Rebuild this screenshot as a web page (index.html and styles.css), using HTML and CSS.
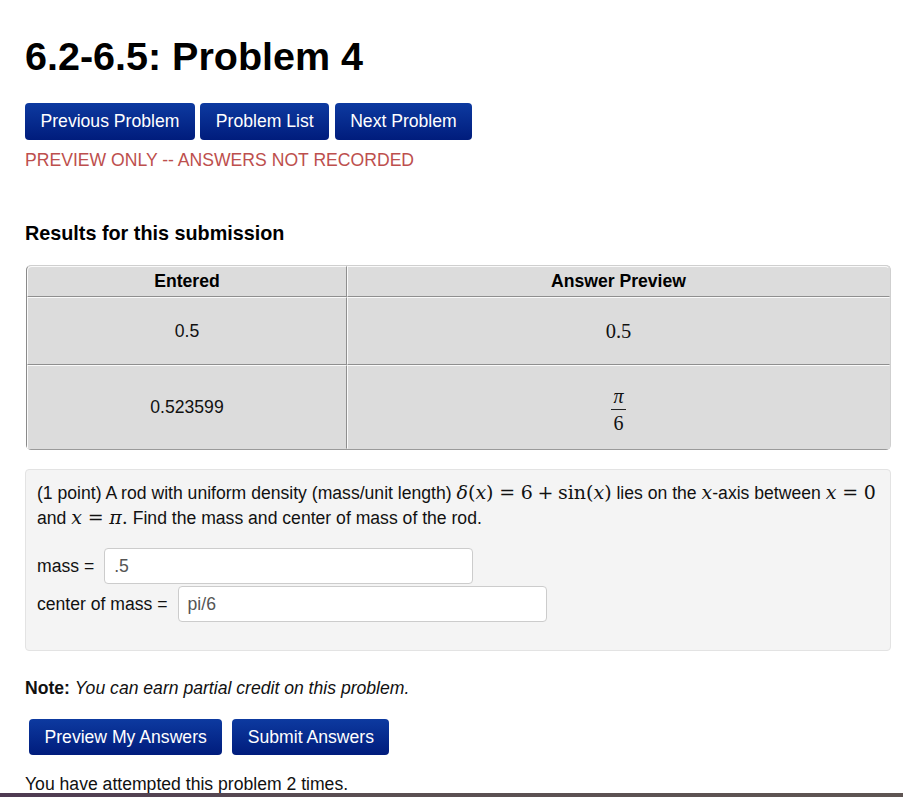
FILE: index.html
```html
<!DOCTYPE html>
<html lang="en">
<head>
  <meta charset="UTF-8" />
  <meta name="viewport" content="width=device-width, initial-scale=1.0" />
  <title>6.2-6.5: Problem 4</title>
  <link rel="stylesheet" href="styles.css">
</head>
<body>
  <div class="page">
    <h1>6.2-6.5: Problem 4</h1>

    <div class="nav">
      <a class="btn" href="#">Previous Problem</a>
      <a class="btn" href="#">Problem List</a>
      <a class="btn" href="#">Next Problem</a>
    </div>

    <p class="preview-msg">PREVIEW ONLY -- ANSWERS NOT RECORDED</p>

    <h3>Results for this submission</h3>

    <table class="results">
      <tr>
        <th>Entered</th>
        <th class="last">Answer Preview</th>
      </tr>
      <tr class="row-short">
        <td>0.5</td>
        <td class="last"><span class="math-preview">0.5</span></td>
      </tr>
      <tr class="row-tall">
        <td>0.523599</td>
        <td class="last">
          <span class="frac"><span class="num"><i>π</i></span><span class="den">6</span></span>
        </td>
      </tr>
    </table>

    <div class="problem">
      <p class="problem-text">(1 point) A rod with uniform density (mass/unit length) <span class="math"><i>δ</i>(<i>x</i>)<span class="rel">=</span>6<span class="bin">+</span>sin(<i>x</i>)</span> lies on the <span class="math"><i>x</i></span>-axis between <span class="math"><i>x</i><span class="rel">=</span>0</span><br>and <span class="math"><i>x</i><span class="rel">=</span><i>π</i>.</span> Find the mass and center of mass of the rod.</p>

      <div class="answer-row">
        <label>mass =</label>
        <input type="text" value=".5">
      </div>
      <div class="answer-row">
        <label>center of mass =</label>
        <input type="text" value="pi/6">
      </div>
    </div>

    <p class="note"><b>Note:</b> <i>You can earn partial credit on this problem.</i></p>

    <div class="submit-buttons">
      <a class="btn" href="#">Preview My Answers</a>
      <a class="btn" href="#">Submit Answers</a>
    </div>

    <p class="attempts">You have attempted this problem 2 times.</p>
  </div>

  <div class="bottom-bar"></div>
</body>
</html>
```

FILE: styles.css
```css
body {
  margin: 0;
  font-family: "Liberation Sans", Arial, sans-serif;
  font-size: 17.6px;
  color: #111;
  background: #fff;
}
.page {
  padding: 34px 0 0 25px;
  width: 866px;
}
h1 {
  margin: 0;
  font-size: 39.5px;
  line-height: 44px;
  font-weight: bold;
  color: #000;
}
.nav {
  display: flex;
  gap: 5.5px;
  margin-top: 25px;
}
.btn {
  display: inline-block;
  height: 37px;
  line-height: 37px;
  padding: 0 15.5px;
  font-size: 17.6px;
  color: #fff;
  text-decoration: none;
  border-radius: 4px;
  background: linear-gradient(to bottom, #0d3aa0, #001c7c);
  box-sizing: border-box;
}
.preview-msg {
  margin: 10px 0 0;
  line-height: 20px;
  color: #bd4f4d;
}
h3 {
  margin: 51px 0 0;
  font-size: 19.8px;
  line-height: 24px;
  color: #000;
}
.results {
  margin-top: 20px;
  margin-left: 1px;
  width: 865px;
  border-collapse: separate;
  border-spacing: 0;
  border: 1px solid #cfcfcf;
  border-left-color: #8a8a8a;
  border-bottom-color: #9a9a9a;
  border-radius: 5px;
  background: #dcdcdc;
}
.results th,
.results td {
  background: #dcdcdc;
  text-align: center;
  border-top: 1px solid #fafafa;
  border-left: 1px solid #fafafa;
  border-right: 1px solid #8f8f8f;
  border-bottom: 1px solid #8f8f8f;
  color: #111;
}
.results th:first-child,
.results td:first-child {
  width: 318px;
}
.results .last {
  border-right-color: #dcdcdc;
}
.results tr:last-child td {
  border-bottom-color: #dcdcdc;
}
.results th {
  font-weight: bold;
  height: 29px;
  padding: 0;
  color: #000;
}
.results th:first-child { border-top-left-radius: 5px; }
.results th.last { border-top-right-radius: 5px; }
.row-short td {
  height: 66px;
  padding: 0;
}
.row-tall td {
  height: 82px;
  padding: 0;
}
.math-preview {
  font-family: "Liberation Serif", "DejaVu Serif", serif;
  font-size: 20.5px;
}
.math {
  font-family: "DejaVu Serif", "Liberation Serif", serif;
  font-size: 19px;
  line-height: 1;
  white-space: nowrap;
}
.math i {
  font-style: italic;
}
.rel {
  margin: 0 0.3em;
}
.bin {
  margin: 0 0.24em;
}
.frac {
  display: inline-flex;
  flex-direction: column;
  align-items: center;
  font-family: "Liberation Serif", "DejaVu Serif", serif;
  font-size: 20px;
  line-height: 22px;
  vertical-align: middle;
  padding-top: 4px;
}
.frac .num {
  padding: 0 2px 2px;
  border-bottom: 1.5px solid #222;
}
.frac .den {
  padding-top: 2px;
}
.problem {
  margin-top: 19px;
  background: #f4f4f4;
  border: 1px solid #e3e3e3;
  border-radius: 4px;
  padding: 11px 11px 28px;
}
.problem-text {
  margin: 0;
  line-height: 25px;
  color: #111;
}
.answer-row {
  display: flex;
  align-items: center;
  gap: 10px;
}
.answer-row:first-of-type {
  margin-top: 17px;
}
.answer-row + .answer-row {
  margin-top: 2px;
}
.answer-row input {
  width: 369px;
  height: 36px;
  box-sizing: border-box;
  border: 1px solid #cccccc;
  border-radius: 4px;
  padding: 0 9px;
  font-family: "Liberation Sans", Arial, sans-serif;
  font-size: 17.6px;
  color: #555;
  background: #fff;
}
.note {
  margin: 25px 0 0;
  line-height: 24px;
}
.submit-buttons {
  display: flex;
  gap: 10px;
  margin: 19px 0 0 4px;
}
.submit-buttons .btn {
  height: 36px;
  line-height: 36px;
}
.attempts {
  margin: 18px 0 0;
  line-height: 22px;
}
.bottom-bar {
  position: fixed;
  left: 0;
  right: 0;
  bottom: 0;
  height: 4px;
  background: linear-gradient(to right, #4e3a52, #5a4f52 40%, #5e5553);
}
```
